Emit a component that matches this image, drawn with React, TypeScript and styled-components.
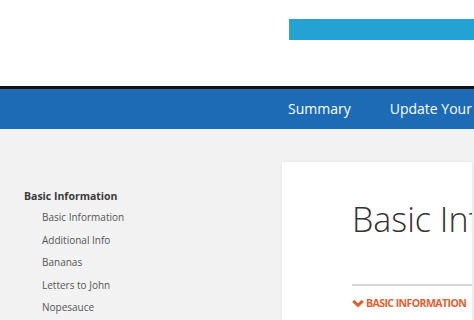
import React from "react";
import styled, { createGlobalStyle } from "styled-components";

const Global = createGlobalStyle`
  html, body { margin: 0; padding: 0; background: #ffffff; overflow: hidden; }
  body { font-family: "Open Sans", "Noto Sans", sans-serif; width: 474px; height: 320px; }
  * { box-sizing: border-box; }
`;

const Page = styled.div`
  width: 474px;
  height: 320px;
  overflow: hidden;
  display: flex;
  flex-direction: column;
`;

const Header = styled.header`
  height: 86px;
  flex: none;
  display: flex;
  align-items: flex-start;
  background: #ffffff;
`;

const SearchBar = styled.div`
  margin-left: 289px;
  margin-top: 19px;
  height: 21px;
  flex: 1;
  background: #24a2d3;
`;

const Nav = styled.nav`
  flex: none;
  height: 43px;
  border-top: 3px solid #111111;
  background: #1c6bb4;
  display: flex;
  align-items: center;
  padding-left: 288px;
  gap: 39px;
  white-space: nowrap;
  overflow: hidden;
`;

const NavItem = styled.a`
  color: #ffffff;
  font-size: 14px;
  text-decoration: none;
  margin-top: -2px;
`;

const Main = styled.div`
  flex: 1;
  display: flex;
  background: #f2f2f2;
  min-height: 0;
`;

const Sidebar = styled.aside`
  width: 282px;
  flex: none;
  padding: 59px 0 0 24px;
  display: flex;
  flex-direction: column;
`;

const SideHeading = styled.div`
  font-size: 10.5px;
  font-weight: 700;
  color: #3a3a3a;
  line-height: 16px;
  margin-bottom: 6px;
`;

const SideLink = styled.div`
  font-size: 10px;
  color: #555555;
  line-height: 14px;
  padding-left: 18px;
  margin-bottom: 8.6px;
`;

const Panel = styled.section`
  flex: 1;
  margin-top: 33px;
  margin-right: 2px;
  background: #ffffff;
  box-shadow: 0 0 3px rgba(0, 0, 0, 0.08);
  padding: 34px 0 0 70px;
  overflow: hidden;
`;

const Title = styled.h1`
  margin: 0;
  font-size: 34px;
  font-weight: 300;
  color: #333333;
  white-space: nowrap;
  line-height: 46px;
`;

const Rule = styled.div`
  margin-top: 42px;
  height: 2px;
  background: #d6d6d6;
`;

const Section = styled.div`
  display: flex;
  align-items: center;
  gap: 2px;
  margin-top: 10px;
  color: #e0602f;
  font-size: 10.5px;
  font-weight: 700;
  white-space: nowrap;
  letter-spacing: -0.55px;
`;

const Chevron = () => (
  <svg width="12" height="9" viewBox="0 0 12 9">
    <path d="M1.2 1.8 L6 6.4 L10.8 1.8" fill="none" stroke="#e0602f" strokeWidth="3" />
  </svg>
);

export default function App() {
  return (
    <Page>
      <Global />
      <Header>
        <SearchBar />
      </Header>
      <Nav>
        <NavItem>Summary</NavItem>
        <NavItem>Update Your Profile</NavItem>
      </Nav>
      <Main>
        <Sidebar>
          <SideHeading>Basic Information</SideHeading>
          <SideLink>Basic Information</SideLink>
          <SideLink>Additional Info</SideLink>
          <SideLink>Bananas</SideLink>
          <SideLink>Letters to John</SideLink>
          <SideLink>Nopesauce</SideLink>
        </Sidebar>
        <Panel>
          <Title>Basic Information</Title>
          <Rule />
          <Section>
            <Chevron />
            BASIC INFORMATION
          </Section>
        </Panel>
      </Main>
    </Page>
  );
}
